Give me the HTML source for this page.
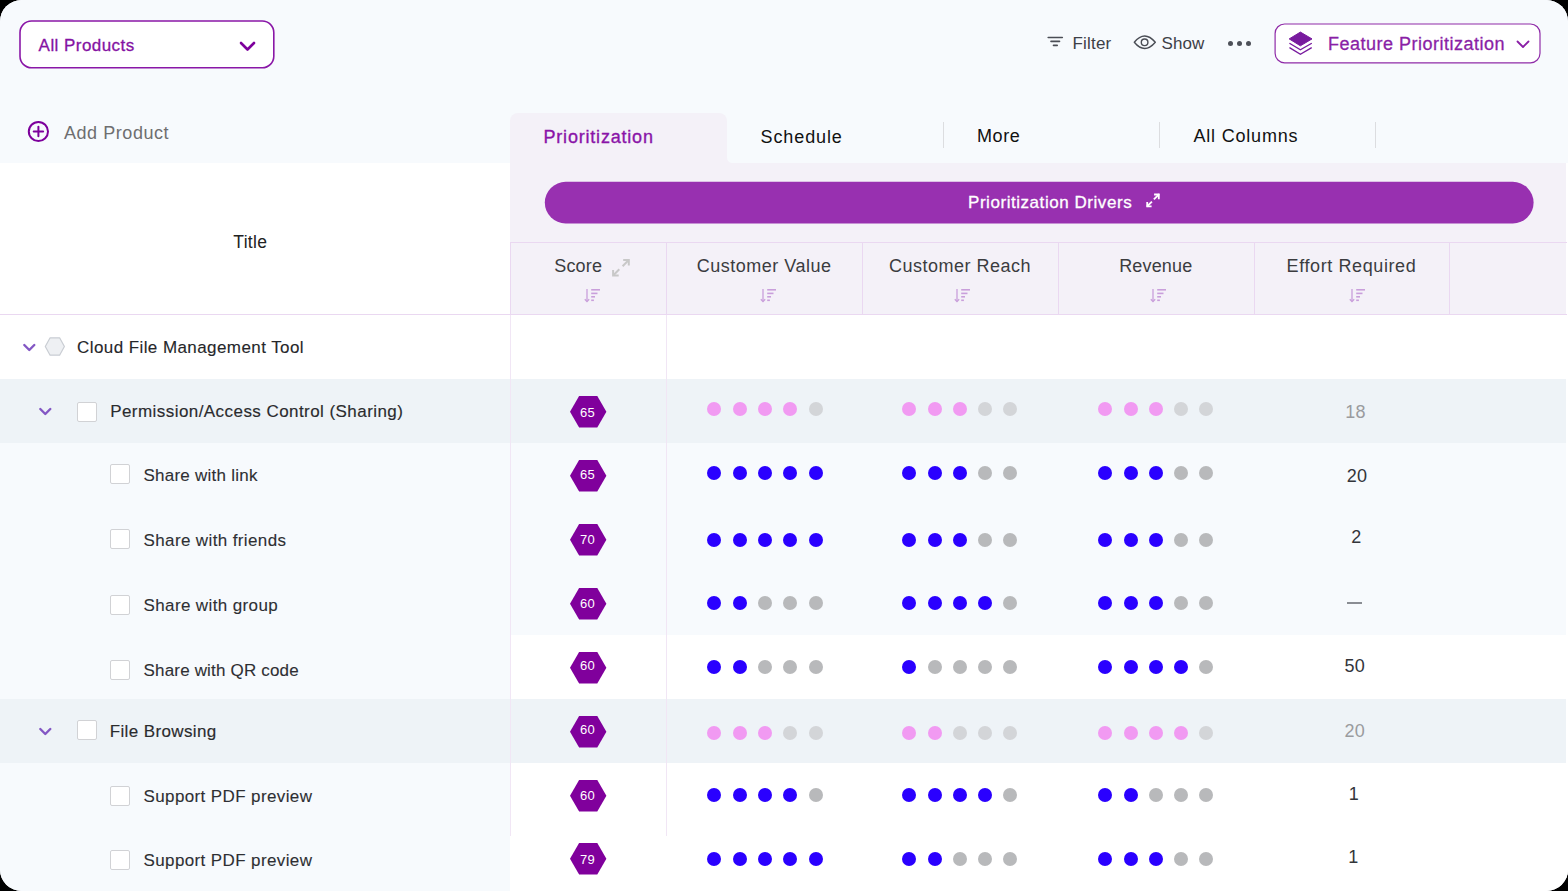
<!DOCTYPE html>
<html><head><meta charset="utf-8"><style>
html,body{margin:0;padding:0;width:1568px;height:891px;overflow:hidden;background:#000;}
#app{position:absolute;left:0;top:0;width:1568px;height:891px;border-radius:21.5px;overflow:hidden;background:#f7fafd;font-family:"Liberation Sans", sans-serif;}
.t{position:absolute;white-space:nowrap;line-height:1;}
.r{position:absolute;box-sizing:content-box;}
svg.r{overflow:visible;}
</style></head><body><div id="app">
<div class="r" style="left:0px;top:0px;width:1568px;height:163px;background:#f7fafd;"></div>
<div class="r" style="left:0px;top:163px;width:510px;height:152px;background:#ffffff;"></div>
<div class="r" style="left:510px;top:163px;width:1057px;height:152px;background:#f4f1f8;"></div>
<div class="r" style="left:510px;top:113px;width:217px;height:59px;background:#f4f1f8;border-radius:8px 8px 0 0;"></div>
<div class="r" style="left:727px;top:157px;width:6px;height:6px;background:#f4f1f8;"></div>
<div class="r" style="left:727px;top:146px;width:18px;height:17px;background:#f7fafd;border-radius:0 0 0 5.5px;"></div>
<div class="r" style="left:0px;top:315px;width:1568px;height:64px;background:#ffffff;"></div>
<div class="r" style="left:0px;top:379px;width:1568px;height:64px;background:#eef3f7;"></div>
<div class="r" style="left:0px;top:443px;width:1568px;height:192px;background:#f7fafd;"></div>
<div class="r" style="left:0px;top:635px;width:510px;height:64px;background:#f7fafd;"></div>
<div class="r" style="left:510px;top:635px;width:1058px;height:64px;background:#ffffff;"></div>
<div class="r" style="left:0px;top:699px;width:1568px;height:64px;background:#eef3f7;"></div>
<div class="r" style="left:0px;top:763px;width:510px;height:128px;background:#f7fafd;"></div>
<div class="r" style="left:510px;top:763px;width:1058px;height:128px;background:#ffffff;"></div>
<div class="r" style="left:1566px;top:163px;width:2px;height:728px;background:#ffffff;"></div>
<div class="r" style="left:510px;top:242px;width:1057px;height:1px;background:#ead8f1;"></div>
<div class="r" style="left:0px;top:314px;width:1567px;height:1px;background:#ead8f1;"></div>
<div class="r" style="left:510px;top:242px;width:1px;height:73px;background:#ead8f1;"></div>
<div class="r" style="left:666px;top:242px;width:1px;height:73px;background:#ead8f1;"></div>
<div class="r" style="left:862px;top:242px;width:1px;height:73px;background:#ead8f1;"></div>
<div class="r" style="left:1058px;top:242px;width:1px;height:73px;background:#ead8f1;"></div>
<div class="r" style="left:1254px;top:242px;width:1px;height:73px;background:#ead8f1;"></div>
<div class="r" style="left:1449px;top:242px;width:1px;height:73px;background:#ead8f1;"></div>
<div class="r" style="left:510px;top:315px;width:1px;height:521px;background:#f1e6f5;"></div>
<div class="r" style="left:666px;top:315px;width:1px;height:521px;background:#f1e6f5;"></div>
<svg class="r" style="left:0;top:0" width="300" height="80"><rect x="20" y="21" width="253.8" height="46.7" rx="11.5" fill="#fff" stroke="#8a17a7" stroke-width="1.6"/></svg>
<div class="t" style="left:38.6px;top:36.61px;font-size:17px;color:#8412a3;letter-spacing:0.45px;font-weight:400;-webkit-text-stroke:0.3px #8412a3;">All Products</div>
<svg class="r" style="left:238px;top:39px" width="20" height="14" viewBox="0 0 20 14"><path d="M3 4 L9.5 10.5 L16 4" fill="none" stroke="#7d009c" stroke-width="2.6" stroke-linecap="round" stroke-linejoin="round"/></svg>
<svg class="r" style="left:1044px;top:33px" width="22" height="16" viewBox="0 0 22 16"><g stroke="#4a4d55" stroke-width="1.6" stroke-linecap="round"><line x1="4.2" y1="4.5" x2="18.3" y2="4.5"/><line x1="7" y1="8.4" x2="15.5" y2="8.4"/><line x1="9.5" y1="12.4" x2="13.2" y2="12.4"/></g></svg>
<div class="t" style="left:1072.5px;top:34.61px;font-size:17px;color:#3d4047;letter-spacing:0.2px;font-weight:400;">Filter</div>
<svg class="r" style="left:1131px;top:33px" width="28" height="20" viewBox="0 0 28 20"><path d="M3.3 9.3 Q13.6 -3.2 24.3 9.3 Q13.6 21.8 3.3 9.3 Z" fill="none" stroke="#4a4d55" stroke-width="1.4" stroke-linejoin="round"/><circle cx="13.6" cy="9.3" r="3.3" fill="none" stroke="#4a4d55" stroke-width="1.4"/></svg>
<div class="t" style="left:1161.5px;top:34.61px;font-size:17px;color:#3d4047;letter-spacing:0.1px;font-weight:400;">Show</div>
<div class="r" style="left:1227.7px;top:40.7px;width:5.2px;height:5.2px;border-radius:50%;background:#4d5058"></div>
<div class="r" style="left:1236.7px;top:40.7px;width:5.2px;height:5.2px;border-radius:50%;background:#4d5058"></div>
<div class="r" style="left:1245.6px;top:40.7px;width:5.2px;height:5.2px;border-radius:50%;background:#4d5058"></div>
<svg class="r" style="left:1260px;top:0" width="300" height="80"><rect x="15.1" y="24" width="264.9" height="38.8" rx="9.5" fill="#fff" stroke="#8f2ba8" stroke-width="1.2"/></svg>
<svg class="r" style="left:1286px;top:29px" width="30" height="28" viewBox="0 0 30 28"><path d="M3.2 9.9 L14.4 3.1 L26 9.9 L14.4 16.8 Z" fill="#781a9e" stroke="#781a9e" stroke-width="1" stroke-linejoin="round"/><path d="M3.9 14.5 L14.4 20.8 L25.3 14.5" fill="none" stroke="#781a9e" stroke-width="1.4" stroke-linecap="round"/><path d="M3.9 18.9 L14.4 25.3 L25.3 18.9" fill="none" stroke="#781a9e" stroke-width="1.4" stroke-linecap="round"/></svg>
<div class="t" style="left:1328.0px;top:34.86px;font-size:18px;color:#8a1fa6;letter-spacing:0.5px;font-weight:400;-webkit-text-stroke:0.3px #8a1fa6;">Feature Prioritization</div>
<svg class="r" style="left:1514px;top:37px" width="18" height="14" viewBox="0 0 18 14"><path d="M3.5 4.5 L9 10 L14.5 4.5" fill="none" stroke="#8a1fa6" stroke-width="1.8" stroke-linecap="round" stroke-linejoin="round"/></svg>
<svg class="r" style="left:25px;top:119px" width="27" height="26" viewBox="0 0 27 26"><circle cx="13.4" cy="12.5" r="9.6" fill="none" stroke="#7d009c" stroke-width="2"/><line x1="13.4" y1="7.8" x2="13.4" y2="17.2" stroke="#7d009c" stroke-width="2" stroke-linecap="round"/><line x1="8.7" y1="12.5" x2="18.1" y2="12.5" stroke="#7d009c" stroke-width="2" stroke-linecap="round"/></svg>
<div class="t" style="left:64.0px;top:123.76px;font-size:18px;color:#6e6e70;letter-spacing:0.55px;font-weight:400;">Add Product</div>
<div class="t" style="left:543.5px;top:128.06px;font-size:18px;color:#8a14a8;letter-spacing:0.8px;font-weight:400;-webkit-text-stroke:0.35px #8a14a8;">Prioritization</div>
<div class="t" style="left:760.5px;top:128.06px;font-size:18px;color:#111111;letter-spacing:0.9px;font-weight:400;">Schedule</div>
<div class="t" style="left:977.0px;top:127.16px;font-size:18px;color:#111111;letter-spacing:0.6px;font-weight:400;">More</div>
<div class="t" style="left:1193.5px;top:126.76px;font-size:18px;color:#111111;letter-spacing:0.8px;font-weight:400;">All Columns</div>
<div class="r" style="left:943px;top:122px;width:1px;height:26px;background:#dcdde0;"></div>
<div class="r" style="left:1159px;top:122px;width:1px;height:26px;background:#dcdde0;"></div>
<div class="r" style="left:1375px;top:122px;width:1px;height:26px;background:#dcdde0;"></div>
<div class="t" style="left:233.3px;top:234.49px;font-size:17.5px;color:#222222;letter-spacing:0.3px;font-weight:400;">Title</div>
<svg class="r" style="left:0;top:0" width="1568" height="240"><rect x="544.8" y="181.8" width="988.8" height="41.6" rx="20.8" fill="#9830b0"/></svg>
<div class="t" style="left:968.0px;top:194.01px;font-size:17px;color:#ffffff;letter-spacing:0.55px;font-weight:400;-webkit-text-stroke:0.3px #fff;">Prioritization Drivers</div>
<svg class="r" style="left:1143px;top:191px" width="20" height="20" viewBox="0 0 20 20"><g fill="none" stroke="#ffffff" stroke-width="1.8" stroke-linecap="square"><path d="M12 3.5 L15.8 3.5 L15.8 7.3"/><line x1="15.5" y1="3.8" x2="11.5" y2="7.8"/><path d="M4.2 11.9 L4.2 15.3 L7.7 15.3"/><line x1="4.5" y1="15" x2="8.3" y2="11.2"/></g></svg>
<div class="t" style="left:554.2px;top:257.16px;font-size:18px;color:#3b3c3f;letter-spacing:0.2px;font-weight:400;">Score</div>
<svg class="r" style="left:610px;top:257px" width="22" height="22" viewBox="0 0 22 22"><g fill="none" stroke="#c8c8c8" stroke-width="2" stroke-linecap="butt"><path d="M13.2 3 L18.8 3 L18.8 8.6"/><line x1="18.5" y1="3.3" x2="12.6" y2="9.2"/><path d="M3.1 13 L3.1 18.5 L8.7 18.5"/><line x1="3.4" y1="18.2" x2="9.3" y2="12.3"/></g></svg>
<svg class="r" style="left:583.3px;top:286px" width="20" height="18" viewBox="0 0 20 18"><g fill="none" stroke="#c99fdb"><line x1="4" y1="3" x2="4" y2="15.4" stroke-width="1.3"/><path d="M1.8 13.2 L4 15.6 L6.2 13.2" stroke-width="1.3"/><line x1="8.2" y1="3.8" x2="17" y2="3.8" stroke-width="1.6"/><line x1="8.2" y1="7.4" x2="14.5" y2="7.4" stroke-width="1.6"/><line x1="8.2" y1="10.8" x2="12" y2="10.8" stroke-width="1.6"/><line x1="8.2" y1="14.3" x2="10.9" y2="14.3" stroke-width="1.6"/></g></svg>
<div class="t" style="left:696.7px;top:256.86px;font-size:18px;color:#3b3c3f;letter-spacing:0.5px;font-weight:400;">Customer Value</div>
<svg class="r" style="left:759.3px;top:286px" width="20" height="18" viewBox="0 0 20 18"><g fill="none" stroke="#c99fdb"><line x1="4" y1="3" x2="4" y2="15.4" stroke-width="1.3"/><path d="M1.8 13.2 L4 15.6 L6.2 13.2" stroke-width="1.3"/><line x1="8.2" y1="3.8" x2="17" y2="3.8" stroke-width="1.6"/><line x1="8.2" y1="7.4" x2="14.5" y2="7.4" stroke-width="1.6"/><line x1="8.2" y1="10.8" x2="12" y2="10.8" stroke-width="1.6"/><line x1="8.2" y1="14.3" x2="10.9" y2="14.3" stroke-width="1.6"/></g></svg>
<div class="t" style="left:660.0px;width:600px;text-align:center;top:256.86px;font-size:18px;color:#3b3c3f;letter-spacing:0.5px;font-weight:400;">Customer Reach</div>
<svg class="r" style="left:953.3px;top:286px" width="20" height="18" viewBox="0 0 20 18"><g fill="none" stroke="#c99fdb"><line x1="4" y1="3" x2="4" y2="15.4" stroke-width="1.3"/><path d="M1.8 13.2 L4 15.6 L6.2 13.2" stroke-width="1.3"/><line x1="8.2" y1="3.8" x2="17" y2="3.8" stroke-width="1.6"/><line x1="8.2" y1="7.4" x2="14.5" y2="7.4" stroke-width="1.6"/><line x1="8.2" y1="10.8" x2="12" y2="10.8" stroke-width="1.6"/><line x1="8.2" y1="14.3" x2="10.9" y2="14.3" stroke-width="1.6"/></g></svg>
<div class="t" style="left:1119.2px;top:256.86px;font-size:18px;color:#3b3c3f;letter-spacing:0.15px;font-weight:400;">Revenue</div>
<svg class="r" style="left:1149.3px;top:286px" width="20" height="18" viewBox="0 0 20 18"><g fill="none" stroke="#c99fdb"><line x1="4" y1="3" x2="4" y2="15.4" stroke-width="1.3"/><path d="M1.8 13.2 L4 15.6 L6.2 13.2" stroke-width="1.3"/><line x1="8.2" y1="3.8" x2="17" y2="3.8" stroke-width="1.6"/><line x1="8.2" y1="7.4" x2="14.5" y2="7.4" stroke-width="1.6"/><line x1="8.2" y1="10.8" x2="12" y2="10.8" stroke-width="1.6"/><line x1="8.2" y1="14.3" x2="10.9" y2="14.3" stroke-width="1.6"/></g></svg>
<div class="t" style="left:1286.6px;top:256.86px;font-size:18px;color:#3b3c3f;letter-spacing:0.6px;font-weight:400;">Effort Required</div>
<svg class="r" style="left:1348.3px;top:286px" width="20" height="18" viewBox="0 0 20 18"><g fill="none" stroke="#c99fdb"><line x1="4" y1="3" x2="4" y2="15.4" stroke-width="1.3"/><path d="M1.8 13.2 L4 15.6 L6.2 13.2" stroke-width="1.3"/><line x1="8.2" y1="3.8" x2="17" y2="3.8" stroke-width="1.6"/><line x1="8.2" y1="7.4" x2="14.5" y2="7.4" stroke-width="1.6"/><line x1="8.2" y1="10.8" x2="12" y2="10.8" stroke-width="1.6"/><line x1="8.2" y1="14.3" x2="10.9" y2="14.3" stroke-width="1.6"/></g></svg>
<svg class="r" style="left:21px;top:341.5px" width="17" height="12" viewBox="0 0 17 12"><path d="M3.3 3.0 L8.3 8.0 L13.3 3.0" fill="none" stroke="#8357c4" stroke-width="2.4" stroke-linecap="round" stroke-linejoin="round"/></svg>
<svg class="r" style="left:44px;top:336px" width="22" height="21" viewBox="0 0 22 21"><path d="M6.1 1.8 L15.6 1.8 L20.4 10.5 L15.6 19.2 L6.1 19.2 L1.3 10.5 Z" fill="#eef0f3" stroke="#c9cdd3" stroke-width="1.2" stroke-linejoin="round"/></svg>
<div class="t" style="left:77.0px;top:338.61px;font-size:17px;color:#26272b;letter-spacing:0.42px;font-weight:400;-webkit-text-stroke:0.12px #26272b;">Cloud File Management Tool</div>
<svg class="r" style="left:36.5px;top:405.8px" width="17" height="12" viewBox="0 0 17 12"><path d="M3.3 3.0 L8.3 8.0 L13.3 3.0" fill="none" stroke="#8357c4" stroke-width="2.4" stroke-linecap="round" stroke-linejoin="round"/></svg>
<div class="r" style="left:77px;top:401.8px;width:18px;height:18px;border:1px solid #d1d2d5;border-radius:2px;background:#fff"></div>
<div class="t" style="left:110.2px;top:402.51px;font-size:17px;color:#2a2b2e;letter-spacing:0.44px;font-weight:400;-webkit-text-stroke:0.15px #2a2b2e;">Permission/Access Control (Sharing)</div>
<div class="r" style="left:110px;top:464.2px;width:18px;height:18px;border:1px solid #d1d2d5;border-radius:2px;background:#fff"></div>
<div class="t" style="left:143.5px;top:466.61px;font-size:17px;color:#2e2f33;letter-spacing:0.24px;font-weight:400;-webkit-text-stroke:0.1px #2e2f33;">Share with link</div>
<div class="r" style="left:110px;top:529.3px;width:18px;height:18px;border:1px solid #d1d2d5;border-radius:2px;background:#fff"></div>
<div class="t" style="left:143.5px;top:531.61px;font-size:17px;color:#2e2f33;letter-spacing:0.38px;font-weight:400;-webkit-text-stroke:0.1px #2e2f33;">Share with friends</div>
<div class="r" style="left:110px;top:594.6px;width:18px;height:18px;border:1px solid #d1d2d5;border-radius:2px;background:#fff"></div>
<div class="t" style="left:143.5px;top:596.61px;font-size:17px;color:#2e2f33;letter-spacing:0.38px;font-weight:400;-webkit-text-stroke:0.1px #2e2f33;">Share with group</div>
<div class="r" style="left:110px;top:659.8px;width:18px;height:18px;border:1px solid #d1d2d5;border-radius:2px;background:#fff"></div>
<div class="t" style="left:143.5px;top:661.81px;font-size:17px;color:#2e2f33;letter-spacing:0.18px;font-weight:400;-webkit-text-stroke:0.1px #2e2f33;">Share with QR code</div>
<svg class="r" style="left:36.5px;top:725.5px" width="17" height="12" viewBox="0 0 17 12"><path d="M3.3 3.0 L8.3 8.0 L13.3 3.0" fill="none" stroke="#8357c4" stroke-width="2.4" stroke-linecap="round" stroke-linejoin="round"/></svg>
<div class="r" style="left:77px;top:720.2px;width:18px;height:18px;border:1px solid #d1d2d5;border-radius:2px;background:#fff"></div>
<div class="t" style="left:109.7px;top:723.21px;font-size:17px;color:#2a2b2e;letter-spacing:0.38px;font-weight:400;-webkit-text-stroke:0.15px #2a2b2e;">File Browsing</div>
<div class="r" style="left:110px;top:786.3px;width:18px;height:18px;border:1px solid #d1d2d5;border-radius:2px;background:#fff"></div>
<div class="t" style="left:143.5px;top:788.01px;font-size:17px;color:#2e2f33;letter-spacing:0.38px;font-weight:400;-webkit-text-stroke:0.1px #2e2f33;">Support PDF preview</div>
<div class="r" style="left:110px;top:850.2px;width:18px;height:18px;border:1px solid #d1d2d5;border-radius:2px;background:#fff"></div>
<div class="t" style="left:143.5px;top:851.81px;font-size:17px;color:#2e2f33;letter-spacing:0.38px;font-weight:400;-webkit-text-stroke:0.1px #2e2f33;">Support PDF preview</div>
<svg class="r" style="left:569.5px;top:395.7px" width="36.4" height="31.4" viewBox="0 0 36.4 31.4"><path d="M0 15.7 L9.1 0 L27.3 0 L36.4 15.7 L27.3 31.4 L9.1 31.4 Z" fill="#80009c"/></svg>
<div class="t" style="left:287.6px;width:600px;text-align:center;top:405.90px;font-size:13px;color:#ffffff;letter-spacing:0.3px;font-weight:400;">65</div>
<svg class="r" style="left:569.5px;top:459.8px" width="36.4" height="31.4" viewBox="0 0 36.4 31.4"><path d="M0 15.7 L9.1 0 L27.3 0 L36.4 15.7 L27.3 31.4 L9.1 31.4 Z" fill="#80009c"/></svg>
<div class="t" style="left:287.6px;width:600px;text-align:center;top:467.60px;font-size:13px;color:#ffffff;letter-spacing:0.3px;font-weight:400;">65</div>
<svg class="r" style="left:569.5px;top:523.8px" width="36.4" height="31.4" viewBox="0 0 36.4 31.4"><path d="M0 15.7 L9.1 0 L27.3 0 L36.4 15.7 L27.3 31.4 L9.1 31.4 Z" fill="#80009c"/></svg>
<div class="t" style="left:287.6px;width:600px;text-align:center;top:533.10px;font-size:13px;color:#ffffff;letter-spacing:0.3px;font-weight:400;">70</div>
<svg class="r" style="left:569.5px;top:587.8px" width="36.4" height="31.4" viewBox="0 0 36.4 31.4"><path d="M0 15.7 L9.1 0 L27.3 0 L36.4 15.7 L27.3 31.4 L9.1 31.4 Z" fill="#80009c"/></svg>
<div class="t" style="left:287.6px;width:600px;text-align:center;top:597.00px;font-size:13px;color:#ffffff;letter-spacing:0.3px;font-weight:400;">60</div>
<svg class="r" style="left:569.5px;top:651.8px" width="36.4" height="31.4" viewBox="0 0 36.4 31.4"><path d="M0 15.7 L9.1 0 L27.3 0 L36.4 15.7 L27.3 31.4 L9.1 31.4 Z" fill="#80009c"/></svg>
<div class="t" style="left:287.6px;width:600px;text-align:center;top:659.20px;font-size:13px;color:#ffffff;letter-spacing:0.3px;font-weight:400;">60</div>
<svg class="r" style="left:569.5px;top:715.8px" width="36.4" height="31.4" viewBox="0 0 36.4 31.4"><path d="M0 15.7 L9.1 0 L27.3 0 L36.4 15.7 L27.3 31.4 L9.1 31.4 Z" fill="#80009c"/></svg>
<div class="t" style="left:287.6px;width:600px;text-align:center;top:723.10px;font-size:13px;color:#ffffff;letter-spacing:0.3px;font-weight:400;">60</div>
<svg class="r" style="left:569.5px;top:779.8px" width="36.4" height="31.4" viewBox="0 0 36.4 31.4"><path d="M0 15.7 L9.1 0 L27.3 0 L36.4 15.7 L27.3 31.4 L9.1 31.4 Z" fill="#80009c"/></svg>
<div class="t" style="left:287.6px;width:600px;text-align:center;top:788.50px;font-size:13px;color:#ffffff;letter-spacing:0.3px;font-weight:400;">60</div>
<svg class="r" style="left:569.5px;top:843.3px" width="36.4" height="31.4" viewBox="0 0 36.4 31.4"><path d="M0 15.7 L9.1 0 L27.3 0 L36.4 15.7 L27.3 31.4 L9.1 31.4 Z" fill="#80009c"/></svg>
<div class="t" style="left:287.6px;width:600px;text-align:center;top:853.00px;font-size:13px;color:#ffffff;letter-spacing:0.3px;font-weight:400;">79</div>
<div class="r" style="left:707.2px;top:402.0px;width:14px;height:14px;border-radius:50%;background:#f19af2"></div>
<div class="r" style="left:732.7px;top:402.0px;width:14px;height:14px;border-radius:50%;background:#f19af2"></div>
<div class="r" style="left:758.2px;top:402.0px;width:14px;height:14px;border-radius:50%;background:#f19af2"></div>
<div class="r" style="left:783.0px;top:402.0px;width:14px;height:14px;border-radius:50%;background:#f19af2"></div>
<div class="r" style="left:808.5px;top:402.0px;width:14px;height:14px;border-radius:50%;background:#d3d5d8"></div>
<div class="r" style="left:902.0px;top:402.0px;width:14px;height:14px;border-radius:50%;background:#f19af2"></div>
<div class="r" style="left:927.8px;top:402.0px;width:14px;height:14px;border-radius:50%;background:#f19af2"></div>
<div class="r" style="left:953.4px;top:402.0px;width:14px;height:14px;border-radius:50%;background:#f19af2"></div>
<div class="r" style="left:977.8px;top:402.0px;width:14px;height:14px;border-radius:50%;background:#d3d5d8"></div>
<div class="r" style="left:1003.4px;top:402.0px;width:14px;height:14px;border-radius:50%;background:#d3d5d8"></div>
<div class="r" style="left:1097.9px;top:402.0px;width:14px;height:14px;border-radius:50%;background:#f19af2"></div>
<div class="r" style="left:1123.5px;top:402.0px;width:14px;height:14px;border-radius:50%;background:#f19af2"></div>
<div class="r" style="left:1149.0px;top:402.0px;width:14px;height:14px;border-radius:50%;background:#f19af2"></div>
<div class="r" style="left:1173.5px;top:402.0px;width:14px;height:14px;border-radius:50%;background:#d3d5d8"></div>
<div class="r" style="left:1198.9px;top:402.0px;width:14px;height:14px;border-radius:50%;background:#d3d5d8"></div>
<div class="r" style="left:707.2px;top:466.0px;width:14px;height:14px;border-radius:50%;background:#2a00ff"></div>
<div class="r" style="left:732.7px;top:466.0px;width:14px;height:14px;border-radius:50%;background:#2a00ff"></div>
<div class="r" style="left:758.2px;top:466.0px;width:14px;height:14px;border-radius:50%;background:#2a00ff"></div>
<div class="r" style="left:783.0px;top:466.0px;width:14px;height:14px;border-radius:50%;background:#2a00ff"></div>
<div class="r" style="left:808.5px;top:466.0px;width:14px;height:14px;border-radius:50%;background:#2a00ff"></div>
<div class="r" style="left:902.0px;top:466.0px;width:14px;height:14px;border-radius:50%;background:#2a00ff"></div>
<div class="r" style="left:927.8px;top:466.0px;width:14px;height:14px;border-radius:50%;background:#2a00ff"></div>
<div class="r" style="left:953.4px;top:466.0px;width:14px;height:14px;border-radius:50%;background:#2a00ff"></div>
<div class="r" style="left:977.8px;top:466.0px;width:14px;height:14px;border-radius:50%;background:#b8b9bb"></div>
<div class="r" style="left:1003.4px;top:466.0px;width:14px;height:14px;border-radius:50%;background:#b8b9bb"></div>
<div class="r" style="left:1097.9px;top:466.0px;width:14px;height:14px;border-radius:50%;background:#2a00ff"></div>
<div class="r" style="left:1123.5px;top:466.0px;width:14px;height:14px;border-radius:50%;background:#2a00ff"></div>
<div class="r" style="left:1149.0px;top:466.0px;width:14px;height:14px;border-radius:50%;background:#2a00ff"></div>
<div class="r" style="left:1173.5px;top:466.0px;width:14px;height:14px;border-radius:50%;background:#b8b9bb"></div>
<div class="r" style="left:1198.9px;top:466.0px;width:14px;height:14px;border-radius:50%;background:#b8b9bb"></div>
<div class="r" style="left:707.2px;top:532.5px;width:14px;height:14px;border-radius:50%;background:#2a00ff"></div>
<div class="r" style="left:732.7px;top:532.5px;width:14px;height:14px;border-radius:50%;background:#2a00ff"></div>
<div class="r" style="left:758.2px;top:532.5px;width:14px;height:14px;border-radius:50%;background:#2a00ff"></div>
<div class="r" style="left:783.0px;top:532.5px;width:14px;height:14px;border-radius:50%;background:#2a00ff"></div>
<div class="r" style="left:808.5px;top:532.5px;width:14px;height:14px;border-radius:50%;background:#2a00ff"></div>
<div class="r" style="left:902.0px;top:532.5px;width:14px;height:14px;border-radius:50%;background:#2a00ff"></div>
<div class="r" style="left:927.8px;top:532.5px;width:14px;height:14px;border-radius:50%;background:#2a00ff"></div>
<div class="r" style="left:953.4px;top:532.5px;width:14px;height:14px;border-radius:50%;background:#2a00ff"></div>
<div class="r" style="left:977.8px;top:532.5px;width:14px;height:14px;border-radius:50%;background:#b8b9bb"></div>
<div class="r" style="left:1003.4px;top:532.5px;width:14px;height:14px;border-radius:50%;background:#b8b9bb"></div>
<div class="r" style="left:1097.9px;top:532.5px;width:14px;height:14px;border-radius:50%;background:#2a00ff"></div>
<div class="r" style="left:1123.5px;top:532.5px;width:14px;height:14px;border-radius:50%;background:#2a00ff"></div>
<div class="r" style="left:1149.0px;top:532.5px;width:14px;height:14px;border-radius:50%;background:#2a00ff"></div>
<div class="r" style="left:1173.5px;top:532.5px;width:14px;height:14px;border-radius:50%;background:#b8b9bb"></div>
<div class="r" style="left:1198.9px;top:532.5px;width:14px;height:14px;border-radius:50%;background:#b8b9bb"></div>
<div class="r" style="left:707.2px;top:596.0px;width:14px;height:14px;border-radius:50%;background:#2a00ff"></div>
<div class="r" style="left:732.7px;top:596.0px;width:14px;height:14px;border-radius:50%;background:#2a00ff"></div>
<div class="r" style="left:758.2px;top:596.0px;width:14px;height:14px;border-radius:50%;background:#b8b9bb"></div>
<div class="r" style="left:783.0px;top:596.0px;width:14px;height:14px;border-radius:50%;background:#b8b9bb"></div>
<div class="r" style="left:808.5px;top:596.0px;width:14px;height:14px;border-radius:50%;background:#b8b9bb"></div>
<div class="r" style="left:902.0px;top:596.0px;width:14px;height:14px;border-radius:50%;background:#2a00ff"></div>
<div class="r" style="left:927.8px;top:596.0px;width:14px;height:14px;border-radius:50%;background:#2a00ff"></div>
<div class="r" style="left:953.4px;top:596.0px;width:14px;height:14px;border-radius:50%;background:#2a00ff"></div>
<div class="r" style="left:977.8px;top:596.0px;width:14px;height:14px;border-radius:50%;background:#2a00ff"></div>
<div class="r" style="left:1003.4px;top:596.0px;width:14px;height:14px;border-radius:50%;background:#b8b9bb"></div>
<div class="r" style="left:1097.9px;top:596.0px;width:14px;height:14px;border-radius:50%;background:#2a00ff"></div>
<div class="r" style="left:1123.5px;top:596.0px;width:14px;height:14px;border-radius:50%;background:#2a00ff"></div>
<div class="r" style="left:1149.0px;top:596.0px;width:14px;height:14px;border-radius:50%;background:#2a00ff"></div>
<div class="r" style="left:1173.5px;top:596.0px;width:14px;height:14px;border-radius:50%;background:#b8b9bb"></div>
<div class="r" style="left:1198.9px;top:596.0px;width:14px;height:14px;border-radius:50%;background:#b8b9bb"></div>
<div class="r" style="left:707.2px;top:660.0px;width:14px;height:14px;border-radius:50%;background:#2a00ff"></div>
<div class="r" style="left:732.7px;top:660.0px;width:14px;height:14px;border-radius:50%;background:#2a00ff"></div>
<div class="r" style="left:758.2px;top:660.0px;width:14px;height:14px;border-radius:50%;background:#b8b9bb"></div>
<div class="r" style="left:783.0px;top:660.0px;width:14px;height:14px;border-radius:50%;background:#b8b9bb"></div>
<div class="r" style="left:808.5px;top:660.0px;width:14px;height:14px;border-radius:50%;background:#b8b9bb"></div>
<div class="r" style="left:902.0px;top:660.0px;width:14px;height:14px;border-radius:50%;background:#2a00ff"></div>
<div class="r" style="left:927.8px;top:660.0px;width:14px;height:14px;border-radius:50%;background:#b8b9bb"></div>
<div class="r" style="left:953.4px;top:660.0px;width:14px;height:14px;border-radius:50%;background:#b8b9bb"></div>
<div class="r" style="left:977.8px;top:660.0px;width:14px;height:14px;border-radius:50%;background:#b8b9bb"></div>
<div class="r" style="left:1003.4px;top:660.0px;width:14px;height:14px;border-radius:50%;background:#b8b9bb"></div>
<div class="r" style="left:1097.9px;top:660.0px;width:14px;height:14px;border-radius:50%;background:#2a00ff"></div>
<div class="r" style="left:1123.5px;top:660.0px;width:14px;height:14px;border-radius:50%;background:#2a00ff"></div>
<div class="r" style="left:1149.0px;top:660.0px;width:14px;height:14px;border-radius:50%;background:#2a00ff"></div>
<div class="r" style="left:1173.5px;top:660.0px;width:14px;height:14px;border-radius:50%;background:#2a00ff"></div>
<div class="r" style="left:1198.9px;top:660.0px;width:14px;height:14px;border-radius:50%;background:#b8b9bb"></div>
<div class="r" style="left:707.2px;top:726.2px;width:14px;height:14px;border-radius:50%;background:#f19af2"></div>
<div class="r" style="left:732.7px;top:726.2px;width:14px;height:14px;border-radius:50%;background:#f19af2"></div>
<div class="r" style="left:758.2px;top:726.2px;width:14px;height:14px;border-radius:50%;background:#f19af2"></div>
<div class="r" style="left:783.0px;top:726.2px;width:14px;height:14px;border-radius:50%;background:#d3d5d8"></div>
<div class="r" style="left:808.5px;top:726.2px;width:14px;height:14px;border-radius:50%;background:#d3d5d8"></div>
<div class="r" style="left:902.0px;top:726.2px;width:14px;height:14px;border-radius:50%;background:#f19af2"></div>
<div class="r" style="left:927.8px;top:726.2px;width:14px;height:14px;border-radius:50%;background:#f19af2"></div>
<div class="r" style="left:953.4px;top:726.2px;width:14px;height:14px;border-radius:50%;background:#d3d5d8"></div>
<div class="r" style="left:977.8px;top:726.2px;width:14px;height:14px;border-radius:50%;background:#d3d5d8"></div>
<div class="r" style="left:1003.4px;top:726.2px;width:14px;height:14px;border-radius:50%;background:#d3d5d8"></div>
<div class="r" style="left:1097.9px;top:726.2px;width:14px;height:14px;border-radius:50%;background:#f19af2"></div>
<div class="r" style="left:1123.5px;top:726.2px;width:14px;height:14px;border-radius:50%;background:#f19af2"></div>
<div class="r" style="left:1149.0px;top:726.2px;width:14px;height:14px;border-radius:50%;background:#f19af2"></div>
<div class="r" style="left:1173.5px;top:726.2px;width:14px;height:14px;border-radius:50%;background:#f19af2"></div>
<div class="r" style="left:1198.9px;top:726.2px;width:14px;height:14px;border-radius:50%;background:#d3d5d8"></div>
<div class="r" style="left:707.2px;top:788.0px;width:14px;height:14px;border-radius:50%;background:#2a00ff"></div>
<div class="r" style="left:732.7px;top:788.0px;width:14px;height:14px;border-radius:50%;background:#2a00ff"></div>
<div class="r" style="left:758.2px;top:788.0px;width:14px;height:14px;border-radius:50%;background:#2a00ff"></div>
<div class="r" style="left:783.0px;top:788.0px;width:14px;height:14px;border-radius:50%;background:#2a00ff"></div>
<div class="r" style="left:808.5px;top:788.0px;width:14px;height:14px;border-radius:50%;background:#b8b9bb"></div>
<div class="r" style="left:902.0px;top:788.0px;width:14px;height:14px;border-radius:50%;background:#2a00ff"></div>
<div class="r" style="left:927.8px;top:788.0px;width:14px;height:14px;border-radius:50%;background:#2a00ff"></div>
<div class="r" style="left:953.4px;top:788.0px;width:14px;height:14px;border-radius:50%;background:#2a00ff"></div>
<div class="r" style="left:977.8px;top:788.0px;width:14px;height:14px;border-radius:50%;background:#2a00ff"></div>
<div class="r" style="left:1003.4px;top:788.0px;width:14px;height:14px;border-radius:50%;background:#b8b9bb"></div>
<div class="r" style="left:1097.9px;top:788.0px;width:14px;height:14px;border-radius:50%;background:#2a00ff"></div>
<div class="r" style="left:1123.5px;top:788.0px;width:14px;height:14px;border-radius:50%;background:#2a00ff"></div>
<div class="r" style="left:1149.0px;top:788.0px;width:14px;height:14px;border-radius:50%;background:#b8b9bb"></div>
<div class="r" style="left:1173.5px;top:788.0px;width:14px;height:14px;border-radius:50%;background:#b8b9bb"></div>
<div class="r" style="left:1198.9px;top:788.0px;width:14px;height:14px;border-radius:50%;background:#b8b9bb"></div>
<div class="r" style="left:707.2px;top:851.8px;width:14px;height:14px;border-radius:50%;background:#2a00ff"></div>
<div class="r" style="left:732.7px;top:851.8px;width:14px;height:14px;border-radius:50%;background:#2a00ff"></div>
<div class="r" style="left:758.2px;top:851.8px;width:14px;height:14px;border-radius:50%;background:#2a00ff"></div>
<div class="r" style="left:783.0px;top:851.8px;width:14px;height:14px;border-radius:50%;background:#2a00ff"></div>
<div class="r" style="left:808.5px;top:851.8px;width:14px;height:14px;border-radius:50%;background:#2a00ff"></div>
<div class="r" style="left:902.0px;top:851.8px;width:14px;height:14px;border-radius:50%;background:#2a00ff"></div>
<div class="r" style="left:927.8px;top:851.8px;width:14px;height:14px;border-radius:50%;background:#2a00ff"></div>
<div class="r" style="left:953.4px;top:851.8px;width:14px;height:14px;border-radius:50%;background:#b8b9bb"></div>
<div class="r" style="left:977.8px;top:851.8px;width:14px;height:14px;border-radius:50%;background:#b8b9bb"></div>
<div class="r" style="left:1003.4px;top:851.8px;width:14px;height:14px;border-radius:50%;background:#b8b9bb"></div>
<div class="r" style="left:1097.9px;top:851.8px;width:14px;height:14px;border-radius:50%;background:#2a00ff"></div>
<div class="r" style="left:1123.5px;top:851.8px;width:14px;height:14px;border-radius:50%;background:#2a00ff"></div>
<div class="r" style="left:1149.0px;top:851.8px;width:14px;height:14px;border-radius:50%;background:#2a00ff"></div>
<div class="r" style="left:1173.5px;top:851.8px;width:14px;height:14px;border-radius:50%;background:#b8b9bb"></div>
<div class="r" style="left:1198.9px;top:851.8px;width:14px;height:14px;border-radius:50%;background:#b8b9bb"></div>
<div class="t" style="left:1055.5px;width:600px;text-align:center;top:403.06px;font-size:18px;color:#9a9b9e;letter-spacing:0.3px;font-weight:400;">18</div>
<div class="t" style="left:1057.0px;width:600px;text-align:center;top:466.76px;font-size:18px;color:#33353a;letter-spacing:0.3px;font-weight:400;">20</div>
<div class="t" style="left:1056.5px;width:600px;text-align:center;top:527.76px;font-size:18px;color:#33353a;letter-spacing:0.3px;font-weight:400;">2</div>
<div class="t" style="left:1054.7px;width:600px;text-align:center;top:657.36px;font-size:18px;color:#33353a;letter-spacing:0.3px;font-weight:400;">50</div>
<div class="t" style="left:1054.7px;width:600px;text-align:center;top:722.36px;font-size:18px;color:#9a9b9e;letter-spacing:0.3px;font-weight:400;">20</div>
<div class="t" style="left:1054.0px;width:600px;text-align:center;top:784.76px;font-size:18px;color:#33353a;letter-spacing:0.3px;font-weight:400;">1</div>
<div class="t" style="left:1053.5px;width:600px;text-align:center;top:848.46px;font-size:18px;color:#33353a;letter-spacing:0.3px;font-weight:400;">1</div>
<div class="r" style="left:1346.5px;top:601.5px;width:15.5px;height:2px;background:#8a8d93;"></div>
</div></body></html>
